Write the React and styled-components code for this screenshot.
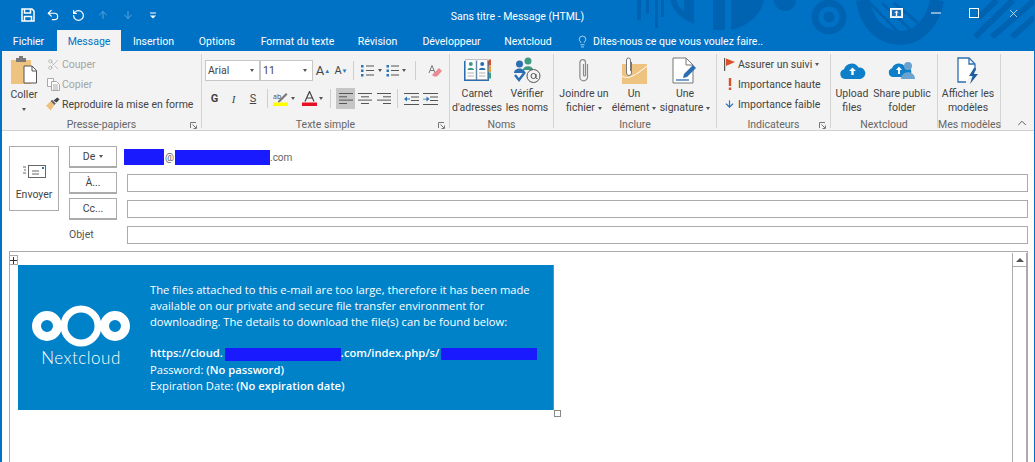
import React from 'react';
import styled, { createGlobalStyle } from 'styled-components';
import { Scissors, Undo2, RotateCw, ArrowUp, ArrowDown, Lightbulb, X, ChevronUp } from 'lucide-react';

const UI_FONT = 'Roboto, "Open Sans", sans-serif';

const GlobalStyle = createGlobalStyle`
  html, body {
    margin: 0;
    padding: 0;
    background: #fff;
    overflow: hidden;
  }
  * { box-sizing: border-box; }
`;

const Window = styled.div`
  width: 1035px;
  height: 462px;
  display: flex;
  flex-direction: column;
  overflow: hidden;
  font-family: ${UI_FONT};
  font-size: 10.5px;
  color: #444;
  background: #fff;
  border-right: 1px solid #0072c6;
  border-left: 2px solid #0072c6;
`;

const Header = styled.header`
  position: relative;
  height: 51px;
  margin: 0 -1px 0 -2px;
  background: #0072c6;
  color: #fff;
  flex: none;
`;

const Pattern = styled.svg`
  position: absolute;
  top: 0;
  left: 620px;
`;

const TitleRow = styled.div`
  position: relative;
  height: 30px;
  display: grid;
  grid-template-columns: 1fr auto 1fr;
  align-items: center;
`;

const QuickAccess = styled.div`
  display: flex;
  align-items: center;
  gap: 11px;
  padding-left: 21px;
`;

const QuickButton = styled.span`
  display: flex;
  width: 14px;
  justify-content: center;
  opacity: ${(p) => (p.$off ? 0.35 : 1)};
`;

const Title = styled.div`
  font-size: 10.5px;
  padding-top: 2px;
`;

const WindowButtons = styled.div`
  display: flex;
  justify-content: flex-end;
  align-items: center;
  gap: 28px;
  padding-right: 15px;
  margin-top: -4px;
`;

const TabRow = styled.nav`
  position: relative;
  height: 21px;
  display: flex;
  align-items: stretch;
`;

const Tab = styled.div`
  display: flex;
  align-items: center;
  justify-content: ${(p) => (p.$pl ? 'flex-start' : 'center')};
  gap: 4px;
  width: ${(p) => p.$w}px;
  padding-left: ${(p) => p.$pl || 0}px;
  padding-top: 2px;
  font-size: 10.5px;
  color: ${(p) => (p.$active ? '#0072c6' : '#fff')};
  background: ${(p) => (p.$active ? '#f3f3f3' : 'transparent')};
`;

const Ribbon = styled.section`
  height: 80px;
  flex: none;
  display: flex;
  align-items: stretch;
  background: #f3f3f3;
  border-bottom: 1px solid #d0d0d0;
  padding-top: 3px;
  position: relative;
`;

const Group = styled.div`
  width: ${(p) => p.$w}px;
  flex: none;
  display: flex;
  flex-direction: column;
  border-right: 1px solid #d4d4d4;
  position: relative;
  margin-bottom: 2px;
`;

const GroupBody = styled.div`
  flex: 1;
  display: flex;
  align-items: flex-start;
  padding-left: ${(p) => p.$pad || 0}px;
  gap: ${(p) => p.$gap || 0}px;
`;

const GroupLabel = styled.div`
  height: 13px;
  line-height: 13px;
  font-size: 10.5px;
  color: #666;
  text-align: center;
  white-space: nowrap;
  margin-bottom: -3px;
`;

const Launcher = styled.svg`
  position: absolute;
  right: 4px;
  bottom: -1px;
`;

const LargeButton = styled.div`
  width: ${(p) => p.$w}px;
  display: flex;
  flex-direction: column;
  align-items: center;
  text-align: center;
  line-height: 14px;
  font-size: 10.5px;
  color: #444;
  white-space: nowrap;
`;

const LargeIcon = styled.div`
  height: ${(p) => p.$h || 33}px;
  display: flex;
  align-items: center;
  justify-content: center;
  padding-bottom: ${(p) => (p.$h ? 0 : 1)}px;
`;

const Caret = styled.span`
  display: inline-block;
  width: 0;
  height: 0;
  margin-left: ${(p) => p.$ml ?? 3}px;
  vertical-align: middle;
  border-left: 2.5px solid transparent;
  border-right: 2.5px solid transparent;
  border-top: 3px solid #555;
`;

const SmallColumn = styled.div`
  display: flex;
  flex-direction: column;
  margin-left: ${(p) => p.$ml || 0}px;
`;

const SmallButton = styled.div`
  height: 20px;
  display: flex;
  align-items: center;
  gap: ${(p) => p.$gap ?? 2}px;
  white-space: nowrap;
  color: ${(p) => (p.$off ? '#a5a5a5' : '#444')};
`;

const SmallIcon = styled.span`
  width: ${(p) => p.$w || 14}px;
  display: flex;
  justify-content: center;
`;

const FontStack = styled.div`
  flex: 1;
  display: flex;
  flex-direction: column;
  gap: 7px;
  padding-top: 6px;
`;

const ToolRow = styled.div`
  height: ${(p) => p.$h || 21}px;
  display: flex;
  align-items: center;
  padding-left: ${(p) => p.$pad || 0}px;
`;

const Combo = styled.div`
  width: ${(p) => p.$w}px;
  height: 21px;
  display: flex;
  align-items: center;
  justify-content: space-between;
  padding: 0 5px 0 2px;
  background: #fff;
  border: 1px solid #c6c6c6;
  font-size: 10.5px;
  color: #444;
`;

const ToolGlyph = styled.span`
  width: ${(p) => p.$w || 19}px;
  height: 21px;
  display: flex;
  align-items: center;
  justify-content: center;
  flex: none;
  margin-left: ${(p) => p.$ml || 0}px;
  font-family: ${(p) => (p.$serif ? '"Liberation Serif", serif' : UI_FONT)};
  font-weight: ${(p) => (p.$bold ? 700 : 400)};
  font-style: ${(p) => (p.$italic ? 'italic' : 'normal')};
  text-decoration: ${(p) => (p.$under ? 'underline' : 'none')};
  font-size: ${(p) => p.$size || 11}px;
  color: #444;
  background: ${(p) => (p.$selected ? '#c6c6c6' : 'transparent')};
`;

const GrowMark = styled.sup`
  color: #2a74b8;
  font-size: 6px;
`;

const ToolDivider = styled.span`
  width: 1px;
  height: 19px;
  margin: 0 ${(p) => p.$m || 4}px;
  background: #cfcfcf;
  flex: none;
`;

const Collapse = styled.div`
  flex: 1;
  display: flex;
  align-items: flex-end;
  justify-content: flex-end;
  padding: 0 5px 0 0;
  color: #555;
`;

const Compose = styled.section`
  flex: 1;
  display: flex;
  flex-direction: column;
  gap: 1px;
  padding: 15px 6px 0 7px;
  min-height: 0;
`;

const Envelope = styled.div`
  display: grid;
  grid-template-columns: 50px 48px 1fr;
  column-gap: 10px;
`;

const SendButton = styled.div`
  height: 65px;
  border: 1px solid #ababab;
  display: flex;
  flex-direction: column;
  align-items: center;
  padding-top: 18px;
  gap: 10px;
  font-size: 10.5px;
  color: #444;
`;

const Fields = styled.div`
  grid-column: 2 / span 2;
  display: grid;
  grid-template-columns: 48px 1fr;
  grid-auto-rows: 26px;
  column-gap: 10px;
`;

const AddressButton = styled.div`
  height: 22px;
  border: 1px solid #ababab;
  border-bottom-width: 2px;
  display: flex;
  align-items: center;
  justify-content: center;
  font-size: 10.5px;
  color: #444;
`;

const FieldLabel = styled.div`
  height: 20px;
  display: flex;
  align-items: center;
  font-size: 10.5px;
  color: #555;
`;

const Input = styled.div`
  height: 18px;
  margin-top: 2px;
  background: #fff;
  border: 1px solid #ababab;
`;

const Sender = styled.div`
  display: flex;
  align-items: center;
  height: 22px;
  margin-left: -3px;
  font-size: 10px;
  color: #666;
`;

const At = styled.span`
  width: 11px;
  text-align: center;
`;

const Redacted = styled.span`
  display: inline-block;
  width: ${(p) => p.$w}px;
  height: ${(p) => p.$h || 15}px;
  margin-left: ${(p) => p.$ml || 0}px;
  background: #1a1aff;
  vertical-align: middle;
`;

const Editor = styled.div`
  position: relative;
  flex: 1;
  display: flex;
  border-top: 1px solid #ababab;
  border-left: 1px solid #ababab;
  border-right: 1px solid #ababab;
  min-height: 0;
`;

const MoveHandle = styled.span`
  position: absolute;
  top: 3px;
  left: -1px;
  width: 9px;
  height: 10px;
  background: #fff;
  border: 1px solid #aaa;
  display: flex;
  align-items: center;
  justify-content: center;
`;

const ResizeHandle = styled.span`
  position: absolute;
  top: 158px;
  left: 544px;
  width: 7px;
  height: 7px;
  background: #fff;
  border: 1px solid #888;
`;

const EditorBody = styled.div`
  flex: 1;
  padding: 13px 0 0 8px;
`;

const Banner = styled.div`
  width: 536px;
  height: 145px;
  background: #0082c9;
  color: #fff;
  display: flex;
  border-right: 1px solid #3d9ad6;
`;

const LogoColumn = styled.div`
  width: 132px;
  flex: none;
  display: flex;
  flex-direction: column;
  align-items: center;
  padding: 40px 6px 0 0;
`;

const Wordmark = styled.div`
  font-family: Lato, "Open Sans", sans-serif;
  font-weight: 300;
  font-size: 17px;
  line-height: 18px;
  letter-spacing: 0.5px;
  margin-top: 2px;
`;

const Copy = styled.div`
  flex: 1;
  padding-top: 16.5px;
  font-family: "Open Sans", sans-serif;
  font-size: 11.2px;
  line-height: 16.4px;
  white-space: nowrap;

  b {
    font-weight: 600;
  }
`;

const Gap = styled.div`
  height: 14.5px;
`;

const Scrollbar = styled.div`
  width: 15px;
  flex: none;
  margin: 1px 0 0 0;
  border-left: 1px solid #ababab;
  border-right: 1px solid #ababab;
  display: flex;
  flex-direction: column;
`;

const ScrollUp = styled.div`
  height: 14px;
  border-bottom: 1px solid #ababab;
  display: flex;
  align-items: center;
  justify-content: center;
`;

const ScrollArrow = styled.span`
  width: 0;
  height: 0;
  border-left: 4px solid transparent;
  border-right: 4px solid transparent;
  border-bottom: 4px solid #555;
`;

const SaveIcon = () => (
  <svg width="14" height="14" viewBox="0 0 14 14" fill="none" stroke="#fff" strokeWidth="1.5">
    <path d="M1 1h10l2 2v10H1z" />
    <path d="M3.5 1v4h6V1M3.5 13V8.5h7V13" />
  </svg>
);

const RestoreRibbonIcon = () => (
  <svg width="13" height="10" viewBox="0 0 13 10">
    <rect x="0.5" y="0.5" width="12" height="9" fill="#d9e8f5" stroke="#fff" />
    <rect x="2" y="2" width="9" height="6" fill="#1d6fb8" />
    <path d="M6.5 2.5l-2 2.2h1.3V8h1.4V4.7h1.3z" fill="#fff" />
  </svg>
);

const PasteIcon = () => (
  <svg width="28" height="30" viewBox="0 0 28 30">
    <path d="M1 4h20v24H1z" fill="#eec27f" />
    <rect x="6" y="2" width="10" height="4" fill="#7a7a7a" />
    <rect x="9" y="0" width="4" height="3" fill="#7a7a7a" />
    <path d="M14 10h8l4.500 4.500V27H14z" fill="#fff" stroke="#555" />
    <path d="M22 10v5h4.500" fill="none" stroke="#555" />
  </svg>
);

const CopyIcon = () => (
  <svg width="13" height="13" viewBox="0 0 13 13" fill="#fff" stroke="#a8a8a8">
    <path d="M0.500 0.500h6v8h-6z" />
    <path d="M4.500 3.500h5l3 3v6h-8z" />
    <path d="M6 7h5M6 9h5M6 11h5" />
  </svg>
);

const BrushIcon = () => (
  <svg width="15" height="14" viewBox="0 0 15 14">
    <path d="M0 9l5-5 4 4-4 6z" fill="#eec27f" />
    <path d="M5 4l4 4 1.500-1.500-4-4z" fill="#666" />
    <path d="M8 3.500L12 0l2.500 2-3 3.500z" fill="#444" />
  </svg>
);

const HighlightIcon = () => (
  <svg width="16" height="15" viewBox="0 0 16 15">
    <text x="0" y="8" fontSize="7" fill="#444" fontFamily="Open Sans">ab</text>
    <path d="M5 10l8-8 1.500 1.500-8 8H5z" fill="#777" />
    <rect x="0" y="11.500" width="15" height="3.500" fill="#ffff00" />
  </svg>
);

const FontColorIcon = () => (
  <svg width="15" height="15" viewBox="0 0 15 15">
    <path d="M3 10.500L7.500 0.500 12 10.500M4.800 7h5.400" fill="none" stroke="#444" strokeWidth="1.200" />
    <rect x="0" y="11.500" width="15" height="3.500" fill="#e81123" />
  </svg>
);

const BulletsIcon = ({ numbered }) => (
  <svg width="13" height="13" viewBox="0 0 13 13">
    {[2, 6.500, 11].map((y) => (
      <g key={y}>
        <rect x={numbered ? 0.500 : 0} y={y - 1} width="2.500" height="2.500" fill="#2a74b8" />
        <rect x="5" y={y - 0.500} width="8" height="1" fill="#555" />
      </g>
    ))}
  </svg>
);

const EraserIcon = () => (
  <svg width="14" height="14" viewBox="0 0 14 14">
    <path d="M1 9L4 1.500 7 9M2.200 6.500h3.600" fill="none" stroke="#777" />
    <path d="M4 11l7-7 3 3-5 5.500H6z" fill="#e98a94" />
  </svg>
);

const AlignIcon = ({ mode }) => {
  const short = mode === 'left' ? [0, 8] : mode === 'center' ? [3, 8] : [6, 8];
  return (
    <svg width="14" height="11" viewBox="0 0 14 11" fill="#555">
      <rect x="0" y="0" width="14" height="1" />
      <rect x={short[0]} y="3.300" width={short[1]} height="1" />
      <rect x="0" y="6.600" width="14" height="1" />
      <rect x={short[0]} y="10" width={short[1]} height="1" />
    </svg>
  );
};

const IndentIcon = ({ flip }) => (
  <svg width="15" height="12" viewBox="0 0 15 12">
    <rect x="0" y="0" width="15" height="1" fill="#555" />
    <rect x="7" y="3.500" width="8" height="1" fill="#555" />
    <rect x="7" y="7" width="8" height="1" fill="#555" />
    <rect x="0" y="11" width="15" height="1" fill="#555" />
    <path d={flip ? 'M0 5.700h3.500V3.500l3 2.500-3 2.500V6.500H0z' : 'M6 5.500H3V3.500l-3 2.500 3 2.500V6.500h3z'} fill="#2a74b8" />
  </svg>
);

const AddressBookIcon = () => (
  <svg width="27" height="24" viewBox="0 0 27 24">
    <path d="M0 3h25v20H0z" fill="#2c6fb0" />
    <path d="M1.500 1.500h10.500v20H1.500zM13 1.500h10.500v20H13z" fill="#fff" stroke="#9a9a9a" strokeWidth="0.600" />
    <circle cx="6.800" cy="6" r="2" fill="#3f9a82" />
    <path d="M3.500 12c0-3 6.500-3 6.500 0z" fill="#3f9a82" />
    <circle cx="18.200" cy="6" r="2" fill="#2c6fb0" />
    <path d="M15 12c0-3 6.500-3 6.500 0z" fill="#2c6fb0" />
    <path d="M3.500 15h6.500M3.500 18h6.500M15 15h6.500M15 18h6.500" stroke="#b0b0b0" />
    <rect x="24.500" y="1.500" width="2.500" height="6" fill="#d9512c" />
    <rect x="24.500" y="8" width="2.500" height="6" fill="#e8a33d" />
    <rect x="24.500" y="14.500" width="2.500" height="6" fill="#3f9a82" />
  </svg>
);

const CheckNamesIcon = () => (
  <svg width="28" height="27" viewBox="0 0 28 27">
    <circle cx="15" cy="4" r="3.500" fill="#3f9a82" />
    <path d="M10 13c0-5 10-5 10 0z" fill="#3f9a82" />
    <circle cx="6.500" cy="7" r="3.500" fill="#2c6fb0" />
    <path d="M1 16c0-6 11-6 11 0z" fill="#2c6fb0" />
    <path d="M2 18l4 5 6-8" fill="none" stroke="#2c6fb0" strokeWidth="2.400" />
    <circle cx="20.500" cy="19" r="6.500" fill="none" stroke="#555" />
    <circle cx="20.500" cy="19" r="2.500" fill="none" stroke="#555" />
    <path d="M23 17v3.500q0 1.500 1.500 1" fill="none" stroke="#555" />
  </svg>
);

const PaperclipIcon = () => (
  <svg width="14" height="25" viewBox="0 0 14 25" fill="none" stroke="#8a8a8a" strokeWidth="1.200">
    <path d="M10.500 6v13a3.800 3.800 0 01-7.600 0V4.500a2.800 2.800 0 015.600 0V17a1 1 0 01-2 0V6" />
  </svg>
);

const AttachItemIcon = () => (
  <svg width="26" height="27" viewBox="0 0 26 27">
    <rect x="1" y="7" width="25" height="20" fill="#eec27f" />
    <path d="M1 19c6 4 12-1 16-3l9-7" fill="none" stroke="#fff" strokeWidth="1" />
    <path d="M10.500 5v11a2.500 2.500 0 01-5 0V3a2 2 0 014 0v11" fill="#fff" stroke="#777" strokeWidth="1" />
  </svg>
);

const SignatureIcon = () => (
  <svg width="26" height="27" viewBox="0 0 26 27">
    <path d="M1 1h13l7 7v18H1z" fill="#fff" stroke="#777" />
    <path d="M14 1v7h7" fill="none" stroke="#777" />
    <path d="M4 23h13" stroke="#2c6fb0" strokeWidth="1.300" />
    <path d="M11 21l1-4 9-9 3 3-9 9z" fill="#2c6fb0" />
  </svg>
);

const FlagIcon = () => (
  <svg width="11" height="13" viewBox="0 0 11 13">
    <rect x="0" y="0" width="1.200" height="13" fill="#555" />
    <path d="M2 0.500L11 4 2 8z" fill="#d9512c" />
  </svg>
);

const HighIcon = () => (
  <svg width="4" height="12" viewBox="0 0 4 12" fill="#d9512c">
    <rect x="0.800" y="0" width="2.400" height="8" />
    <rect x="0.800" y="9.500" width="2.400" height="2.500" />
  </svg>
);

const UploadCloudIcon = () => (
  <svg width="27" height="17" viewBox="0 0 27 17">
    <path d="M6 17a5 5 0 01-1-9.800A8 8 0 0119.500 5.500 5.800 5.800 0 0121.500 17z" fill="#0f7fc9" />
    <path d="M13.500 5.500l-3.500 3.500h2.300v4h2.400v-4H17z" fill="#fff" />
  </svg>
);

const ShareCloudIcon = () => (
  <svg width="28" height="18" viewBox="0 0 28 18">
    <path d="M5 16a4.500 4.500 0 01-1-8.800A7.500 7.500 0 0117 5.500a5 5 0 012 10.500z" fill="#0f7fc9" />
    <path d="M11 5.500L8 9h2v4h2V9h2z" fill="#fff" />
    <circle cx="20" cy="5" r="4" fill="#6aa2d0" />
    <path d="M13 18c0-9 14-9 14 0z" fill="#6aa2d0" />
  </svg>
);

const TemplatesIcon = () => (
  <svg width="22" height="27" viewBox="0 0 22 27">
    <path d="M9 25H1V1h11l6 6v7" fill="#fff" stroke="#2c6fb0" strokeWidth="1.300" />
    <path d="M12 1v6h6" fill="none" stroke="#2c6fb0" strokeWidth="1.300" />
    <path d="M17 11l-5 8h3.500L13 27l8-10h-4l2-6z" fill="#1f5f9e" />
  </svg>
);

const LauncherIcon = () => (
  <Launcher width="7" height="7" viewBox="0 0 7 7" fill="none" stroke="#777">
    <path d="M0.500 6V0.500H6" />
    <path d="M2.500 2.500L6 6M3.500 6.500h3v-3" />
  </Launcher>
);

const NextcloudLogo = () => (
  <svg width="98" height="42" viewBox="0 0 98 42" fill="none" stroke="#fff">
    <circle cx="49" cy="21" r="17" strokeWidth="7" />
    <circle cx="15" cy="21" r="10.500" strokeWidth="9" />
    <circle cx="83" cy="21" r="10.500" strokeWidth="9" />
  </svg>
);

const MoveGlyph = () => (
  <svg width="7" height="7" viewBox="0 0 7 7" stroke="#333" fill="none">
    <path d="M3.500 0v7M0 3.500h7" />
  </svg>
);

const HeaderPattern = () => (
  <Pattern width="415" height="45" viewBox="0 0 415 45" fill="none">
    <g fill="#0063b1">
      <rect x="17" y="0" width="4" height="20" />
      <rect x="26" y="0" width="3" height="14" />
      <rect x="35" y="0" width="3" height="28" />
      <rect x="41" y="0" width="3" height="17" />
      <path d="M50 0h6c2 5 4 9 8 11V0h10v24l-10-5C58 15 52 8 50 0z" />
      <rect x="93" y="0" width="12" height="30" />
      <path d="M111 0h33c-2 12-14 26-33 30z" />
      <path d="M154 0h22a11 11 0 01-22 0z" />
    </g>
    <circle cx="209" cy="17" r="14" stroke="#0063b1" strokeWidth="7" />
    <circle cx="209" cy="17" r="5.500" fill="#0063b1" />
    <path d="M243 0c3 26 21 38 37 38 17 0 33-14 37-38" stroke="#0063b1" strokeWidth="14" />
    <path d="M250 3l35 36M262 3l30 28M274 3l24 20" stroke="#0063b1" strokeWidth="3" />
    <path d="M355 37l38-37M372 37l43-37M392 37l23-20M358 18L377 0" stroke="#0063b1" strokeWidth="6" />
  </Pattern>
);

const App = () => (
  <>
    <GlobalStyle />
    <Window>
      <Header>
        <HeaderPattern />
        <TitleRow>
          <QuickAccess>
            <QuickButton><SaveIcon /></QuickButton>
            <QuickButton><Undo2 size={14} strokeWidth={2} /></QuickButton>
            <QuickButton><RotateCw size={13} strokeWidth={2.2} style={{ transform: 'scaleX(-1)' }} /></QuickButton>
            <QuickButton $off><ArrowUp size={12} strokeWidth={2} /></QuickButton>
            <QuickButton $off><ArrowDown size={12} strokeWidth={2} /></QuickButton>
            <QuickButton>
              <svg width="7" height="7" viewBox="0 0 7 7" fill="#fff"><rect y="0.500" width="6" height="1" /><path d="M0 3.500h6L3 6.500z" /></svg>
            </QuickButton>
          </QuickAccess>
          <Title>Sans titre - Message (HTML)</Title>
          <WindowButtons>
            <RestoreRibbonIcon />
            <svg width="10" height="2" viewBox="0 0 10 2"><rect width="10" height="1" y="0.500" fill="#fff" /></svg>
            <svg width="10" height="10" viewBox="0 0 10 10" fill="none" stroke="#fff"><rect x="0.500" y="0.500" width="9" height="9" /></svg>
            <X size={13} strokeWidth={1.2} />
          </WindowButtons>
        </TitleRow>
        <TabRow>
          <Tab $w={57}>Fichier</Tab>
          <Tab $w={64} $active>Message</Tab>
          <Tab $w={65}>Insertion</Tab>
          <Tab $w={62}>Options</Tab>
          <Tab $w={99}>Format du texte</Tab>
          <Tab $w={61}>Révision</Tab>
          <Tab $w={87}>Développeur</Tab>
          <Tab $w={66}>Nextcloud</Tab>
          <Tab $w={210} $pl={15}>
            <Lightbulb size={13} strokeWidth={1.2} />
            Dites-nous ce que vous voulez faire..
          </Tab>
        </TabRow>
      </Header>

      <Ribbon>
        <Group $w={200}>
          <GroupBody $pad={7}>
            <LargeButton $w={30}>
              <LargeIcon $h={34}><PasteIcon /></LargeIcon>
              Coller
              <span><Caret $ml={0} /></span>
            </LargeButton>
            <SmallColumn $ml={7}>
              <SmallButton $off><SmallIcon><Scissors size={13} strokeWidth={1.2} /></SmallIcon>Couper</SmallButton>
              <SmallButton $off><SmallIcon><CopyIcon /></SmallIcon>Copier</SmallButton>
              <SmallButton><SmallIcon><BrushIcon /></SmallIcon>Reproduire la mise en forme</SmallButton>
            </SmallColumn>
          </GroupBody>
          <GroupLabel>Presse-papiers</GroupLabel>
          <LauncherIcon />
        </Group>

        <Group $w={248}>
          <FontStack>
            <ToolRow $pad={3}>
              <Combo $w={55}>Arial<Caret /></Combo>
              <Combo $w={53}>11<Caret /></Combo>
              <ToolGlyph $w={18} $size={13} $ml={1}>A<GrowMark>▲</GrowMark></ToolGlyph>
              <ToolGlyph $w={18} $size={11}>A<GrowMark>▼</GrowMark></ToolGlyph>
              <ToolDivider $m={3} />
              <ToolGlyph $w={21}><BulletsIcon /></ToolGlyph>
              <Caret $ml={0} />
              <ToolGlyph $w={20}><BulletsIcon numbered /></ToolGlyph>
              <Caret $ml={0} />
              <ToolDivider $m={9} />
              <ToolGlyph><EraserIcon /></ToolGlyph>
            </ToolRow>
            <ToolRow $pad={3}>
              <ToolGlyph $bold $w={19} $size={11}>G</ToolGlyph>
              <ToolGlyph $italic $w={19} $size={11} $serif>I</ToolGlyph>
              <ToolGlyph $under $w={20} $size={11}>S</ToolGlyph>
              <ToolDivider $m={4} />
              <ToolGlyph $w={18}><HighlightIcon /></ToolGlyph>
              <Caret $ml={1} />
              <ToolGlyph $w={20} $ml={4}><FontColorIcon /></ToolGlyph>
              <Caret $ml={0} />
              <ToolDivider $m={7} />
              <ToolGlyph $w={19} $selected $ml={-2}><AlignIcon mode="left" /></ToolGlyph>
              <ToolGlyph $w={19}><AlignIcon mode="center" /></ToolGlyph>
              <ToolGlyph $w={19}><AlignIcon mode="right" /></ToolGlyph>
              <ToolDivider $m={4} />
              <ToolGlyph $w={19}><IndentIcon /></ToolGlyph>
              <ToolGlyph $w={19}><IndentIcon flip /></ToolGlyph>
            </ToolRow>
          </FontStack>
          <GroupLabel>Texte simple</GroupLabel>
          <LauncherIcon />
        </Group>

        <Group $w={104}>
          <GroupBody $pad={1}>
            <LargeButton $w={52}>
              <LargeIcon><AddressBookIcon /></LargeIcon>
              Carnet<br />d'adresses
            </LargeButton>
            <LargeButton $w={48}>
              <LargeIcon><CheckNamesIcon /></LargeIcon>
              Vérifier<br />les noms
            </LargeButton>
          </GroupBody>
          <GroupLabel>Noms</GroupLabel>
        </Group>

        <Group $w={163}>
          <GroupBody $pad={5}>
            <LargeButton $w={50}>
              <LargeIcon><PaperclipIcon /></LargeIcon>
              Joindre un
              <span>fichier<Caret /></span>
            </LargeButton>
            <LargeButton $w={50}>
              <LargeIcon><AttachItemIcon /></LargeIcon>
              Un
              <span>élément<Caret /></span>
            </LargeButton>
            <LargeButton $w={52}>
              <LargeIcon><SignatureIcon /></LargeIcon>
              Une
              <span>signature<Caret /></span>
            </LargeButton>
          </GroupBody>
          <GroupLabel>Inclure</GroupLabel>
        </Group>

        <Group $w={114}>
          <GroupBody $pad={7}>
            <SmallColumn>
              <SmallButton $gap={3}><SmallIcon $w={11}><FlagIcon /></SmallIcon>Assurer un suivi<Caret $ml={0} /></SmallButton>
              <SmallButton $gap={3}><SmallIcon $w={11}><HighIcon /></SmallIcon>Importance haute</SmallButton>
              <SmallButton $gap={3}><SmallIcon $w={11}><ArrowDown size={12} strokeWidth={2.5} color="#2a74b8" /></SmallIcon>Importance faible</SmallButton>
            </SmallColumn>
          </GroupBody>
          <GroupLabel>Indicateurs</GroupLabel>
          <LauncherIcon />
        </Group>

        <Group $w={107}>
          <GroupBody>
            <LargeButton $w={42}>
              <LargeIcon><UploadCloudIcon /></LargeIcon>
              Upload<br />files
            </LargeButton>
            <LargeButton $w={58}>
              <LargeIcon><ShareCloudIcon /></LargeIcon>
              Share public<br />folder
            </LargeButton>
          </GroupBody>
          <GroupLabel>Nextcloud</GroupLabel>
        </Group>

        <Group $w={63}>
          <GroupBody>
            <LargeButton $w={60}>
              <LargeIcon><TemplatesIcon /></LargeIcon>
              Afficher les<br />modèles
            </LargeButton>
          </GroupBody>
          <GroupLabel>Mes modèles</GroupLabel>
        </Group>

        <Collapse><ChevronUp size={14} strokeWidth={1.6} /></Collapse>
      </Ribbon>

      <Compose>
        <Envelope>
          <SendButton>
            <svg width="23" height="13" viewBox="0 0 23 13" fill="none" stroke="#666">
              <rect x="5.500" y="0.500" width="17" height="12" fill="#fff" />
              <path d="M0 2h3M1 5h2M0 8h3M9 6h7M9 9h7" />
              <rect x="19" y="2" width="2" height="2" fill="#2a74b8" stroke="none" />
            </svg>
            Envoyer
          </SendButton>
          <Fields>
            <AddressButton>De<Caret $ml={4} /></AddressButton>
            <Sender>
              <Redacted $w={40} $h={16} />
              <At>@</At>
              <Redacted $w={95} $h={15} />
              .com
            </Sender>
            <AddressButton>À...</AddressButton>
            <Input />
            <AddressButton>Cc...</AddressButton>
            <Input />
            <FieldLabel>Objet</FieldLabel>
            <Input />
          </Fields>
        </Envelope>

        <Editor>
          <MoveHandle><MoveGlyph /></MoveHandle>
          <EditorBody>
            <Banner>
              <LogoColumn>
                <NextcloudLogo />
                <Wordmark>Nextcloud</Wordmark>
              </LogoColumn>
              <Copy>
                The files attached to this e-mail are too large, therefore it has been made<br />
                available on our private and secure file transfer environment for<br />
                downloading. The details to download the file(s) can be found below:
                <Gap />
                <b>https://cloud.<Redacted $w={116} $h={13} $ml={2} />.com/index.php/s/<Redacted $w={96} $h={12} $ml={2} /></b><br />
                Password: <b>(No password)</b><br />
                Expiration Date: <b>(No expiration date)</b>
              </Copy>
            </Banner>
          </EditorBody>
          <ResizeHandle />
          <Scrollbar>
            <ScrollUp><ScrollArrow /></ScrollUp>
          </Scrollbar>
        </Editor>
      </Compose>
    </Window>
  </>
);

export default App;
